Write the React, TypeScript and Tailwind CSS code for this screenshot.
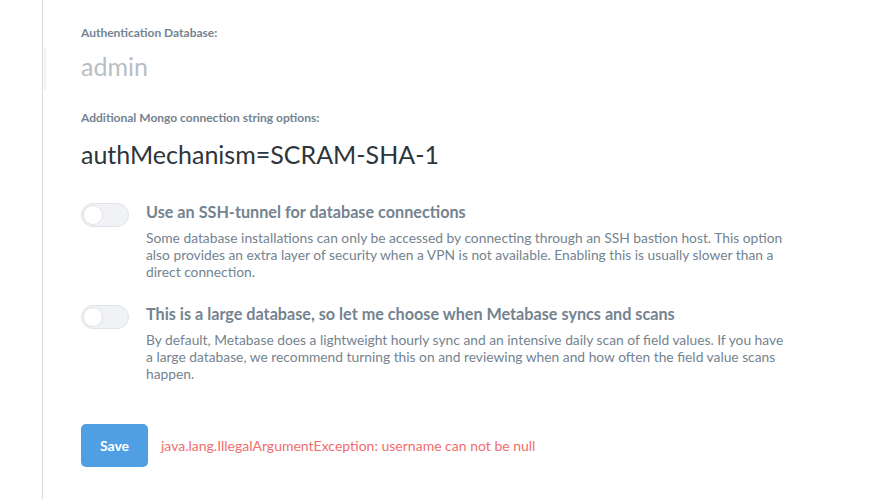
export default function App() {
  return (
    <div className="h-[499px] w-[879px] overflow-hidden bg-white font-['Lato',sans-serif]">
      <div className="ml-[42px] flex h-full border-l border-[#d9d9d9]">
        <div className="relative flex flex-col pl-[38px] pt-[25px]">
          <div className="absolute left-[1px] top-[48px] h-[42px] w-[2px] bg-[#eef2f7]" />
          <div className="text-[12px] font-bold leading-[16px] text-[#74838f]">Authentication Database:</div>
          <div className="mt-[10px] text-[25px] leading-[30px] text-[#b8bec6]">admin</div>

          <div className="mt-[29px] text-[12px] font-bold leading-[16px] text-[#74838f]">
            Additional Mongo connection string options:
          </div>
          <div className="mt-[13px] text-[25px] leading-[30px] text-[#2e353b]">authMechanism=SCRAM-SHA-1</div>

          <div className="mt-[33px] flex">
            <div className="mt-[1px] h-[24px] w-[48px] shrink-0 rounded-full border border-[#dfe3e8] bg-[#f0f2f5] p-[1px]">
              <div className="h-[20px] w-[20px] rounded-full border border-[#dfe3e8] bg-white" />
            </div>
            <div className="ml-[17px] w-[645px]">
              <div className="text-[16.2px] font-bold leading-[20px] text-[#74838f]">
                Use an SSH-tunnel for database connections
              </div>
              <div className="mt-[7px] text-[13.8px] leading-[17px] text-[#74838f]">
                Some database installations can only be accessed by connecting through an SSH bastion host. This option also
                provides an extra layer of security when a VPN is not available. Enabling this is usually slower than a direct
                connection.
              </div>
            </div>
          </div>

          <div className="mt-[24px] flex">
            <div className="mt-[1px] h-[24px] w-[48px] shrink-0 rounded-full border border-[#dfe3e8] bg-[#f0f2f5] p-[1px]">
              <div className="h-[20px] w-[20px] rounded-full border border-[#dfe3e8] bg-white" />
            </div>
            <div className="ml-[17px] w-[645px]">
              <div className="text-[16.2px] font-bold leading-[20px] text-[#74838f]">
                This is a large database, so let me choose when Metabase syncs and scans
              </div>
              <div className="mt-[7px] text-[13.8px] leading-[17px] text-[#74838f]">
                By default, Metabase does a lightweight hourly sync and an intensive daily scan of field values. If you have a
                large database, we recommend turning this on and reviewing when and how often the field value scans happen.
              </div>
            </div>
          </div>

          <div className="mt-[42px] flex items-center">
            <button className="h-[43px] w-[67px] rounded-[5px] bg-[#509ee3] text-[14px] font-bold text-white">Save</button>
            <span className="ml-[13px] text-[14px] text-[#ef6e6e]">
              java.lang.IllegalArgumentException: username can not be null
            </span>
          </div>
        </div>
      </div>
    </div>
  )
}
